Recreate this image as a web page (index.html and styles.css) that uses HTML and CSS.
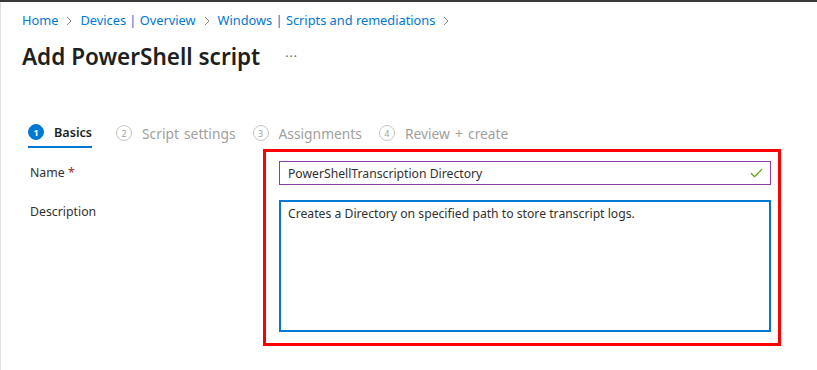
FILE: index.html
```html
<!DOCTYPE html>
<html>
<head>
<meta charset="utf-8">
<link rel="stylesheet" href="styles.css">
</head>
<body>
<div class="page">
  <nav class="crumbs">
    <a class="crumb">Home</a><svg class="chev" width="6" height="10" viewBox="0 0 6 10"><path d="M1 1 L5 5 L1 9" fill="none" stroke="#8a8886" stroke-width="1"/></svg>
    <a class="crumb">Devices | Overview</a><svg class="chev" width="6" height="10" viewBox="0 0 6 10"><path d="M1 1 L5 5 L1 9" fill="none" stroke="#8a8886" stroke-width="1"/></svg>
    <a class="crumb">Windows | Scripts and remediations</a><svg class="chev" width="6" height="10" viewBox="0 0 6 10"><path d="M1 1 L5 5 L1 9" fill="none" stroke="#8a8886" stroke-width="1"/></svg>
  </nav>
  <div class="titlebar">
    <h1 class="title">Add PowerShell script</h1>
    <span class="more">···</span>
  </div>
  <div class="steps">
    <div class="step active"><span class="num">1</span><span class="lbl">Basics</span></div>
    <div class="step"><span class="num">2</span><span class="lbl">Script settings</span></div>
    <div class="step"><span class="num">3</span><span class="lbl">Assignments</span></div>
    <div class="step"><span class="num">4</span><span class="lbl">Review + create</span></div>
  </div>
  <div class="form">
    <div class="row">
      <label class="label">Name <span class="req">*</span></label>
      <div class="input valid">
        <span class="val">PowerShellTranscription Directory</span>
        <svg class="check" width="13" height="10" viewBox="0 0 13 10"><path d="M1 5.2 L4.6 8.6 L12 1.2" fill="none" stroke="#57a300" stroke-width="1.2"/></svg>
      </div>
    </div>
    <div class="row">
      <label class="label">Description</label>
      <div class="textarea">Creates a Directory on specified path to store transcript logs.</div>
    </div>
    <div class="highlight"></div>
  </div>
</div>
</body>
</html>
```
FILE: styles.css
```css
html, body {
  margin: 0;
  padding: 0;
  background: #fff;
}
body {
  font-family: "Noto Sans", "Open Sans", sans-serif;
  color: #323130;
  border-top: 2px solid #3b3a39;
  height: 368px;
  overflow: hidden;
}
.page {
  border-left: 1px solid #e1dfdd;
  height: 100%;
  padding-left: 21px;
  box-sizing: border-box;
}
.crumbs {
  display: flex;
  align-items: center;
  padding-top: 9px;
  height: 18px;
  font-size: 12.8px;
}
.crumb {
  color: #0078d4;
}
.chev {
  margin: 1px 8px 0 8px;
}
.titlebar {
  display: flex;
  align-items: center;
  margin-top: 12px;
  height: 30px;
}
.title {
  margin: 0;
  font-size: 22.5px;
  font-weight: 600;
  color: #201f1e;
}
.more {
  margin-left: 25px;
  color: #605e5c;
  font-size: 12px;
  letter-spacing: 1px;
}
.steps {
  display: flex;
  margin-top: 49px;
  margin-left: 6px;
}
.step {
  display: flex;
  align-items: center;
  height: 28px;
  color: #a19f9d;
  font-size: 13.8px;
  word-spacing: 1.5px;
  box-sizing: border-box;
  padding-bottom: 2px;
  margin-right: 17px;
}
.step .num {
  width: 14px;
  height: 14px;
  border: 1px solid #c8c6c4;
  border-radius: 50%;
  font-size: 9px;
  display: flex;
  align-items: center;
  justify-content: center;
  margin-right: 10px;
  color: #a19f9d;
}
.step.active {
  border-bottom: 2px solid #0078d4;
  color: #201f1e;
  font-weight: 600;
  font-size: 12.6px;
  margin-right: 24px;
}
.step.active .num {
  background: #0078d4;
  border-color: #0078d4;
  color: #fff;
  font-weight: 700;
}
.form {
  position: relative;
  margin-left: 8px;
  margin-top: 13px;
  width: 742px;
}
.row {
  display: flex;
  margin-bottom: 15px;
}
.label {
  width: 249px;
  font-size: 12.3px;
  line-height: 24px;
  color: #323130;
}
.req {
  color: #a4262c;
}
.input {
  width: 492px;
  height: 24px;
  box-sizing: border-box;
  border: 1px solid #8a3ea6;
  display: flex;
  align-items: center;
  padding: 0 7px 0 8px;
  font-size: 12.2px;
  color: #323130;
}
.val {
  flex: 1;
}
.textarea {
  width: 492px;
  height: 132px;
  box-sizing: border-box;
  border: 2px solid #0078d4;
  padding: 3px 7px;
  font-size: 12.2px;
  color: #323130;
}
.highlight {
  position: absolute;
  left: 233px;
  top: -12px;
  width: 518px;
  height: 197px;
  box-sizing: border-box;
  border: 3px solid #ff0000;
  pointer-events: none;
}
```
